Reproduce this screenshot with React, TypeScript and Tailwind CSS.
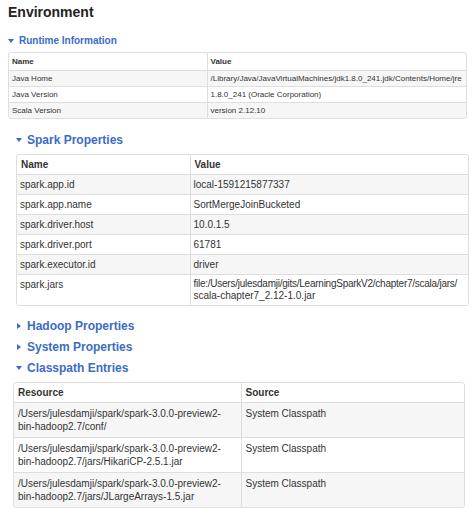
import type { ReactNode } from "react";

type Cell = ReactNode;

interface TableProps {
  head: [string, string];
  rows: Cell[][];
  wrap: string;
  firstCol: string;
  cell: string;
  headCell: string;
}

// bordered + striped table, like the Spark UI bootstrap tables
function DataTable({ head, rows, wrap, firstCol, cell, headCell }: TableProps) {
  return (
    <div className={`overflow-hidden rounded-[3px] border border-[#dedede] bg-white ${wrap}`}>
      <table className="w-full table-fixed border-collapse text-[#333]">
        <colgroup>
          <col className={firstCol} />
          <col />
        </colgroup>
        <thead>
          <tr>
            <th className={`text-left font-bold ${headCell}`}>{head[0]}</th>
            <th className={`border-l border-[#dedede] text-left font-bold ${headCell}`}>{head[1]}</th>
          </tr>
        </thead>
        <tbody>
          {rows.map((r, i) => (
            <tr key={i} className={i % 2 === 0 ? "bg-[#f6f6f6]" : "bg-white"}>
              <td className={`border-t border-[#dedede] align-top ${cell}`}>{r[0]}</td>
              <td className={`border-t border-l border-[#dedede] align-top whitespace-nowrap ${cell}`}>{r[1]}</td>
            </tr>
          ))}
        </tbody>
      </table>
    </div>
  );
}

function Section({ open, children, className }: { open: boolean; children: ReactNode; className: string }) {
  return (
    <div className={`flex items-center font-bold text-[#3b6cc6] ${className}`}>
      {open ? (
        <span className="mr-[5px] inline-block h-0 w-0 border-x-[3px] border-t-[4px] border-x-transparent border-t-[#3b6cc6]" />
      ) : (
        <span className="mr-[6px] ml-[1px] inline-block h-0 w-0 border-y-[3px] border-l-[4px] border-y-transparent border-l-[#3b6cc6]" />
      )}
      {children}
    </div>
  );
}

const runtimeRows: Cell[][] = [
  ["Java Home", "/Library/Java/JavaVirtualMachines/jdk1.8.0_241.jdk/Contents/Home/jre"],
  ["Java Version", "1.8.0_241 (Oracle Corporation)"],
  ["Scala Version", "version 2.12.10"],
];

const sparkRows: Cell[][] = [
  ["spark.app.id", "local-1591215877337"],
  ["spark.app.name", "SortMergeJoinBucketed"],
  ["spark.driver.host", "10.0.1.5"],
  ["spark.driver.port", "61781"],
  ["spark.executor.id", "driver"],
  [
    "spark.jars",
    <span className="block leading-[12px]">
      <span className="tracking-[-0.25px]">file:/Users/julesdamji/gits/LearningSparkV2/chapter7/scala/jars/</span>
      <br />
      scala-chapter7_2.12-1.0.jar
    </span>,
  ],
];

const classpathRows: Cell[][] = [
  [
    <>/Users/julesdamji/spark/spark-3.0.0-preview2-<br />bin-hadoop2.7/conf/</>,
    "System Classpath",
  ],
  [
    <>/Users/julesdamji/spark/spark-3.0.0-preview2-<br />bin-hadoop2.7/jars/HikariCP-2.5.1.jar</>,
    "System Classpath",
  ],
  [
    <>/Users/julesdamji/spark/spark-3.0.0-preview2-<br />bin-hadoop2.7/jars/JLargeArrays-1.5.jar</>,
    "System Classpath",
  ],
];

export default function App() {
  return (
    <div className="h-[509px] w-[474px] overflow-hidden bg-white font-['Liberation_Sans',Arial,sans-serif]">
      <h1 className="px-[8px] pt-[4px] text-[14px] leading-[16px] font-bold text-[#222]">Environment</h1>

      <Section open className="mt-[15px] pl-[8px] text-[10px] leading-[12px]">
        Runtime Information
      </Section>
      <DataTable
        head={["Name", "Value"]}
        rows={runtimeRows}
        wrap="mt-[5px] ml-[8px] w-[459px]"
        firstCol="w-[198px]"
        headCell="px-[3px] py-[3px] text-[8px] leading-[11px]"
        cell="px-[3px] py-[2px] text-[8px] leading-[11px]"
      />

      <Section open className="mt-[14px] pl-[16px] text-[12px] leading-[14px]">
        Spark Properties
      </Section>
      <DataTable
        head={["Name", "Value"]}
        rows={sparkRows}
        wrap="mt-[7px] ml-[16px] w-[453px]"
        firstCol="w-[173px]"
        headCell="px-[4px] py-[3px] text-[10px] leading-[13px]"
        cell="px-[3px] py-[3px] text-[10px] leading-[13px]"
      />

      <Section open={false} className="mt-[13px] pl-[16px] text-[12px] leading-[14px]">
        Hadoop Properties
      </Section>
      <Section open={false} className="mt-[7px] pl-[16px] text-[12px] leading-[14px]">
        System Properties
      </Section>
      <Section open className="mt-[7px] pl-[16px] text-[12px] leading-[14px]">
        Classpath Entries
      </Section>
      <DataTable
        head={["Resource", "Source"]}
        rows={classpathRows}
        wrap="mt-[7px] ml-[13px] w-[452px]"
        firstCol="w-[227px]"
        headCell="px-[4px] py-[3px] text-[10px] leading-[13px]"
        cell="px-[4px] pt-[4px] pb-[4px] text-[10px] leading-[13px]"
      />
    </div>
  );
}
